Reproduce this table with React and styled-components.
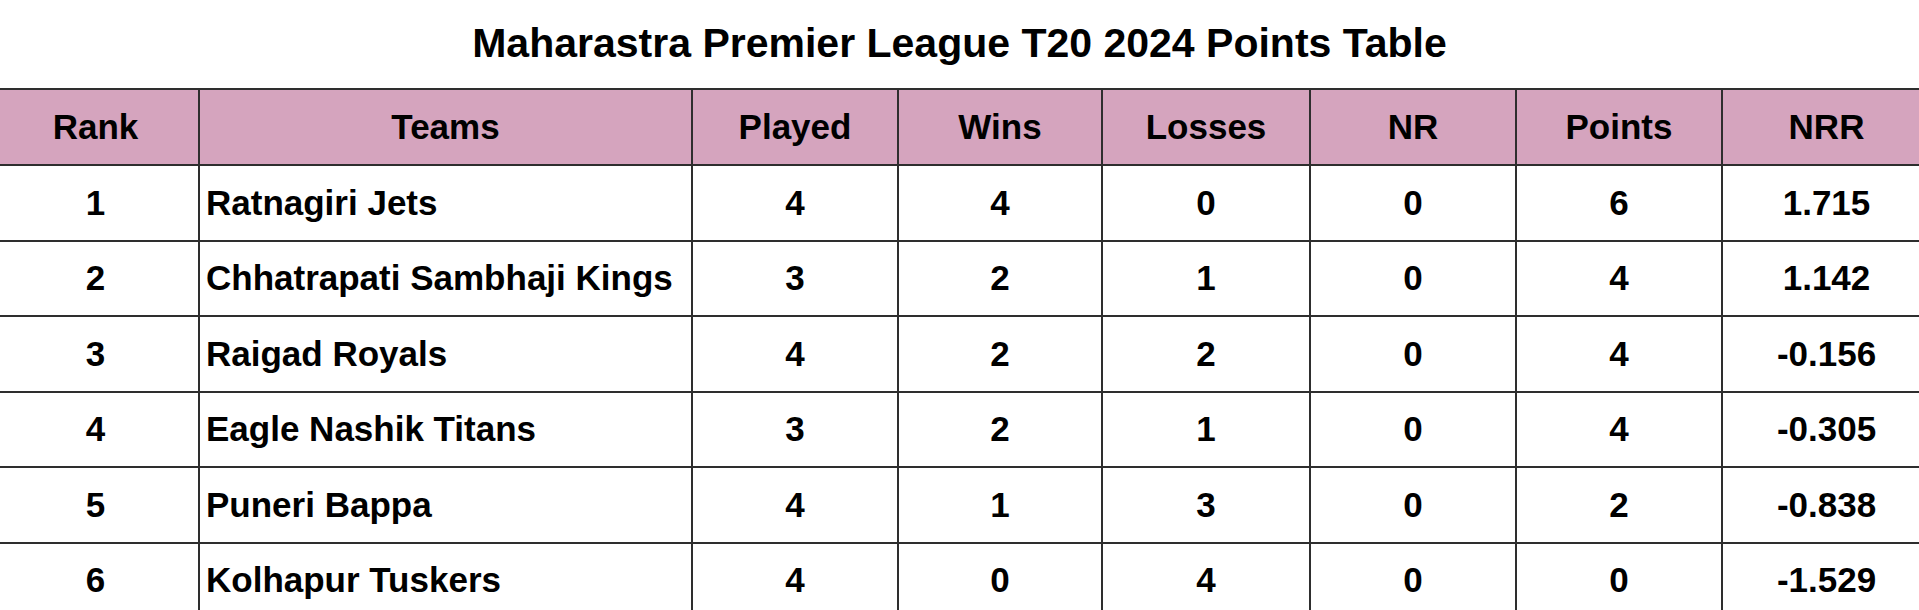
import React from 'react'
import styled, { createGlobalStyle } from 'styled-components'

const GlobalStyle = createGlobalStyle`
  html, body {
    margin: 0;
    padding: 0;
    background: #ffffff;
    overflow: hidden;
  }
  body {
    font-family: 'Liberation Sans', Arial, sans-serif;
    color: #000;
  }
`

const columns = [
  { key: 'rank', label: 'Rank', width: 207 },
  { key: 'team', label: 'Teams', width: 493, left: true },
  { key: 'played', label: 'Played', width: 206 },
  { key: 'wins', label: 'Wins', width: 204 },
  { key: 'losses', label: 'Losses', width: 208 },
  { key: 'nr', label: 'NR', width: 206 },
  { key: 'points', label: 'Points', width: 206 },
  { key: 'nrr', label: 'NRR', width: 209 },
]

const rows = [
  { rank: 1, team: 'Ratnagiri Jets', played: 4, wins: 4, losses: 0, nr: 0, points: 6, nrr: '1.715' },
  { rank: 2, team: 'Chhatrapati Sambhaji Kings', played: 3, wins: 2, losses: 1, nr: 0, points: 4, nrr: '1.142' },
  { rank: 3, team: 'Raigad Royals', played: 4, wins: 2, losses: 2, nr: 0, points: 4, nrr: '-0.156' },
  { rank: 4, team: 'Eagle Nashik Titans', played: 3, wins: 2, losses: 1, nr: 0, points: 4, nrr: '-0.305' },
  { rank: 5, team: 'Puneri Bappa', played: 4, wins: 1, losses: 3, nr: 0, points: 2, nrr: '-0.838' },
  { rank: 6, team: 'Kolhapur Tuskers', played: 4, wins: 0, losses: 4, nr: 0, points: 0, nrr: '-1.529' },
]

function App() {
  return (
    <Page>
      <GlobalStyle />
      <Title>Maharastra Premier League T20 2024 Points Table</Title>
      <Table>
        <colgroup>
          {columns.map((c) => (
            <col key={c.key} style={{ width: c.width }} />
          ))}
        </colgroup>
        <thead>
          <tr>
            {columns.map((c) => (
              <Th key={c.key}>{c.label}</Th>
            ))}
          </tr>
        </thead>
        <tbody>
          {rows.map((r) => (
            <tr key={r.rank}>
              {columns.map((c) => (
                <Td key={c.key} $left={c.left}>
                  {r[c.key]}
                </Td>
              ))}
            </tr>
          ))}
        </tbody>
      </Table>
    </Page>
  )
}

export default App

const Page = styled.main`
  width: 1919px;
  height: 610px;
  overflow: hidden;
  padding-top: 23px;
  box-sizing: border-box;
`

const Title = styled.h1`
  margin: 0 0 24px;
  font-size: 41px;
  line-height: 41px;
  font-weight: 700;
  text-align: center;
  color: #000;
`

const Table = styled.table`
  border-collapse: collapse;
  table-layout: fixed;
  width: 1939px;
  margin-left: -9px;
  font-size: 35px;
  font-weight: 700;
`

const Th = styled.th`
  height: 74px;
  padding: 0;
  background: #d5a4be;
  border: 2px solid #2e2e2e;
  text-align: center;
  font-weight: 700;
  color: #000;
`

const Td = styled.td`
  height: 73.5px;
  padding: ${(p) => (p.$left ? '0 0 0 6px' : '0')};
  background: #fff;
  border: 2px solid #2e2e2e;
  text-align: ${(p) => (p.$left ? 'left' : 'center')};
  color: #000;
  white-space: nowrap;
`
